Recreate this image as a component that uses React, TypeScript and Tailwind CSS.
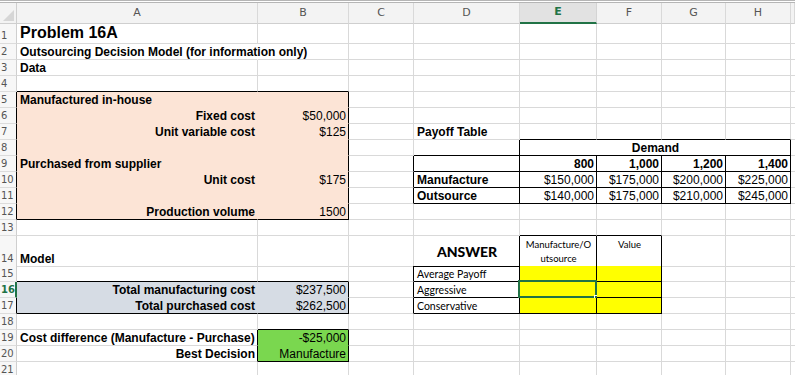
import React from 'react';

const GRID = 'grid grid-cols-[17px_241px_91px_65px_106px_77px_65px_64px_65px_1fr]';

// border colours per edge
const GR = 'border-r-[#d9d9d9]';
const GB = 'border-b-[#d9d9d9]';
const KR = 'border-r-black';
const KB = 'border-b-black';
const PR = 'border-r-[#fce4d6]';
const PB = 'border-b-[#fce4d6]';
const BR = 'border-r-[#d6dce4]';
const BB = 'border-b-[#d6dce4]';
const NB = 'border-b-[#7ad74f]';
const WR = 'border-r-white';

const PEACH = 'bg-[#fce4d6]';
const BLUE = 'bg-[#d6dce4]';
const GREEN = 'bg-[#7ad74f]';
const YELLOW = 'bg-[#ffff00]';

const BOLD = "font-['Liberation_Sans',Arial,sans-serif] font-bold text-[12px] leading-[14px]";
const REG = "font-['Liberation_Sans',Arial,sans-serif] text-[12px] leading-[14px]";
const CAL = "font-['Lato','Open_Sans',sans-serif] text-[10.5px] leading-[13px]";

type CellProps = {
  t?: React.ReactNode;
  a?: 'l' | 'r' | 'c';
  f?: string;
  bg?: string;
  r?: string;
  b?: string;
  x?: string;
  children?: React.ReactNode;
};

function Cell({ t, a = 'l', f = BOLD, bg = '', r = GR, b = GB, x = '', children }: CellProps) {
  const justify = a === 'r' ? 'justify-end' : a === 'c' ? 'justify-center' : 'justify-start';
  return (
    <div
      className={`relative border-r border-b ${r} ${b} ${bg} ${f} flex items-end ${justify} whitespace-nowrap pl-[3px] pr-[2px] text-black ${x}`}
    >
      {t}
      {children}
    </div>
  );
}

function RowHead({ n, r = 'border-r-[#cfcfcf]', active = false }: { n: number; r?: string; active?: boolean }) {
  return (
    <div
      className={`border-b border-b-[#dcdcdc] bg-[#f7f7f7] flex items-end pl-[1px] pb-[1px] font-['DejaVu_Sans',sans-serif] text-[10px] leading-[13px] ${
        active ? 'border-r-2 border-r-[#217346] text-[#217346] font-bold' : `border-r ${r} text-[#555]`
      }`}
    >
      {n}
    </div>
  );
}

function Row({ h = 'h-4', children }: { h?: string; children: React.ReactNode }) {
  return <div className={`${GRID} ${h}`}>{children}</div>;
}

function Blank({ n = 1, b = GB }: { n?: number; b?: string }) {
  return (
    <>
      {Array.from({ length: n }).map((_, i) => (
        <Cell key={i} b={b} />
      ))}
    </>
  );
}

function ColHeader() {
  const cols = ['A', 'B', 'C', 'D', 'E', 'F', 'G', 'H', ''];
  return (
    <div className="border-t-[3px] border-double border-t-[#b5b5b5]">
      <div className={`${GRID} h-[21px] bg-[#f3f3f3]`}>
        <div className="border-r border-b border-[#cfcfcf] flex items-end justify-end">
          <svg width="11" height="11" viewBox="0 0 11 11" className="mb-[2px] mr-[2px]">
            <polygon points="11,0 11,11 0,11" fill="#d6d6d6" />
          </svg>
        </div>
        {cols.map((c, i) =>
          c === 'E' ? (
            <div
              key={i}
              className="bg-[#e2e2e2] border-r border-r-[#d4d4d4] border-b-2 border-b-[#217346] flex items-center justify-center font-['DejaVu_Sans',sans-serif] text-[11px] font-bold text-[#217346]"
            >
              {c}
            </div>
          ) : (
            <div
              key={i}
              className="border-r border-r-[#d9d9d9] border-b border-b-[#cfcfcf] flex items-center justify-center font-['DejaVu_Sans',sans-serif] text-[11px] text-[#555]"
            >
              {c}
            </div>
          )
        )}
      </div>
    </div>
  );
}

export default function App() {
  return (
    <div className="w-[795px] h-[375px] overflow-hidden bg-white">
      <ColHeader />

      <Row h="h-5">
        <RowHead n={1} />
        <Cell t="Problem 16A" x="text-[16px] leading-[18px] pb-[1px]" />
        <Blank n={8} />
      </Row>

      <Row>
        <RowHead n={2} />
        <Cell t="Outsourcing Decision Model (for information only)" r={WR} />
        <Blank n={8} />
      </Row>

      <Row>
        <RowHead n={3} />
        <Cell t="Data" />
        <Blank n={8} />
      </Row>

      <Row>
        <RowHead n={4} />
        <Cell b={KB} />
        <Cell b={KB} />
        <Blank n={7} />
      </Row>

      {/* data block, rows 5-12 */}
      <Row>
        <RowHead n={5} r={KR} />
        <Cell t="Manufactured in-house" bg={PEACH} r={PR} b={PB} />
        <Cell bg={PEACH} r={KR} b={PB} />
        <Blank n={7} />
      </Row>

      <Row>
        <RowHead n={6} r={KR} />
        <Cell t="Fixed cost" a="r" bg={PEACH} r={PR} b={PB} />
        <Cell t="$50,000" a="r" f={REG} bg={PEACH} r={KR} b={PB} />
        <Blank n={7} />
      </Row>

      <Row>
        <RowHead n={7} r={KR} />
        <Cell t="Unit variable cost" a="r" bg={PEACH} r={PR} b={PB} />
        <Cell t="$125" a="r" f={REG} bg={PEACH} r={KR} b={PB} />
        <Cell />
        <Cell t="Payoff Table" />
        <Cell b={KB} />
        <Cell b={KB} />
        <Cell b={KB} />
        <Cell b={KB} />
        <Cell />
      </Row>

      <Row>
        <RowHead n={8} r={KR} />
        <Cell bg={PEACH} r={PR} b={PB} />
        <Cell bg={PEACH} r={KR} b={PB} />
        <Cell />
        <Cell r={KR} b={KB} />
        <Cell t="Demand" a="c" r={KR} b={KB} x="col-span-4" />
        <Cell />
      </Row>

      <Row>
        <RowHead n={9} r={KR} />
        <Cell t="Purchased from supplier" bg={PEACH} r={PR} b={PB} />
        <Cell bg={PEACH} r={KR} b={PB} />
        <Cell r={KR} />
        <Cell r={KR} b={KB} />
        <Cell t="800" a="r" r={KR} b={KB} />
        <Cell t="1,000" a="r" r={KR} b={KB} />
        <Cell t="1,200" a="r" r={KR} b={KB} />
        <Cell t="1,400" a="r" r={KR} b={KB} />
        <Cell />
      </Row>

      <Row>
        <RowHead n={10} r={KR} />
        <Cell t="Unit cost" a="r" bg={PEACH} r={PR} b={PB} />
        <Cell t="$175" a="r" f={REG} bg={PEACH} r={KR} b={PB} />
        <Cell r={KR} />
        <Cell t="Manufacture" r={KR} b={KB} />
        <Cell t="$150,000" a="r" f={REG} r={KR} b={KB} />
        <Cell t="$175,000" a="r" f={REG} r={KR} b={KB} />
        <Cell t="$200,000" a="r" f={REG} r={KR} b={KB} />
        <Cell t="$225,000" a="r" f={REG} r={KR} b={KB} />
        <Cell />
      </Row>

      <Row>
        <RowHead n={11} r={KR} />
        <Cell bg={PEACH} r={PR} b={PB} />
        <Cell bg={PEACH} r={KR} b={PB} />
        <Cell r={KR} />
        <Cell t="Outsource" r={KR} b={KB} />
        <Cell t="$140,000" a="r" f={REG} r={KR} b={KB} />
        <Cell t="$175,000" a="r" f={REG} r={KR} b={KB} />
        <Cell t="$210,000" a="r" f={REG} r={KR} b={KB} />
        <Cell t="$245,000" a="r" f={REG} r={KR} b={KB} />
        <Cell />
      </Row>

      <Row>
        <RowHead n={12} r={KR} />
        <Cell t="Production volume" a="r" bg={PEACH} r={PR} b={KB} />
        <Cell t="1500" a="r" f={REG} bg={PEACH} r={KR} b={KB} />
        <Blank n={7} />
      </Row>

      <Row>
        <RowHead n={13} />
        <Blank n={4} />
        <Cell b={KB} />
        <Cell b={KB} />
        <Blank n={3} />
      </Row>

      {/* answer header, row 14 */}
      <Row h="h-[30px]">
        <RowHead n={14} />
        <Cell t="Model" />
        <Cell />
        <Cell />
        <Cell
          t="ANSWER"
          a="c"
          r={KR}
          b={KB}
          f="font-['Lato','Open_Sans',sans-serif] font-black text-[14px] leading-[16px]"
          x="pb-[6px]"
        />
        <Cell
          a="c"
          r={KR}
          b={KB}
          f="font-['Lato','Open_Sans',sans-serif] text-[9.5px] leading-[13px]"
          x="items-start pt-[2px] whitespace-normal text-center break-all"
        >
          <span className="leading-[14px]">
            Manufacture/O
            <br />
            utsource
          </span>
        </Cell>
        <Cell
          t="Value"
          a="c"
          r={KR}
          b={KB}
          f="font-['Lato','Open_Sans',sans-serif] text-[9.5px] leading-[13px]"
          x="items-start pt-[2px]"
        />
        <Blank n={3} />
      </Row>

      <Row>
        <RowHead n={15} />
        <Cell b={KB} />
        <Cell b={KB} />
        <Cell r={KR} />
        <Cell t="Average Payoff" f={CAL} r={KR} b={KB} />
        <Cell bg={YELLOW} r={KR} b={KB} />
        <Cell bg={YELLOW} r={KR} b={KB} />
        <Blank n={3} />
      </Row>

      <Row>
        <RowHead n={16} active />
        <Cell t="Total manufacturing cost" a="r" bg={BLUE} r={BR} b={BB} />
        <Cell t="$237,500" a="r" f={REG} bg={BLUE} r={KR} b={BB} />
        <Cell r={KR} />
        <Cell t="Aggressive" f={CAL} r={KR} b={KB} />
        <Cell bg={YELLOW} r={KR} b={KB}>
          <div className="absolute -left-[2px] -top-[2px] right-[-1px] bottom-[-1px] border-2 border-[#217346]" />
          <div className="absolute right-[-4px] bottom-[-4px] w-[6px] h-[6px] bg-[#217346] border border-white" />
        </Cell>
        <Cell bg={YELLOW} r={KR} b={KB} />
        <Blank n={3} />
      </Row>

      <Row>
        <RowHead n={17} r={KR} />
        <Cell t="Total purchased cost" a="r" bg={BLUE} r={BR} b={KB} />
        <Cell t="$262,500" a="r" f={REG} bg={BLUE} r={KR} b={KB} />
        <Cell r={KR} />
        <Cell t="Conservative" f={CAL} r={KR} b={KB} />
        <Cell bg={YELLOW} r={KR} b={KB} />
        <Cell bg={YELLOW} r={KR} b={KB} />
        <Blank n={3} />
      </Row>

      <Row>
        <RowHead n={18} />
        <Cell />
        <Cell b={KB} />
        <Blank n={7} />
      </Row>

      <Row>
        <RowHead n={19} />
        <Cell t="Cost difference (Manufacture - Purchase)" r={KR} />
        <Cell t="-$25,000" a="r" f={REG} bg={GREEN} r={KR} b={NB} />
        <Blank n={7} />
      </Row>

      <Row>
        <RowHead n={20} />
        <Cell t="Best Decision" a="r" r={KR} />
        <Cell t="Manufacture" a="r" f={REG} bg={GREEN} r={KR} b={KB} />
        <Blank n={7} />
      </Row>

      <Row>
        <RowHead n={21} />
        <Blank n={9} />
      </Row>
    </div>
  );
}
